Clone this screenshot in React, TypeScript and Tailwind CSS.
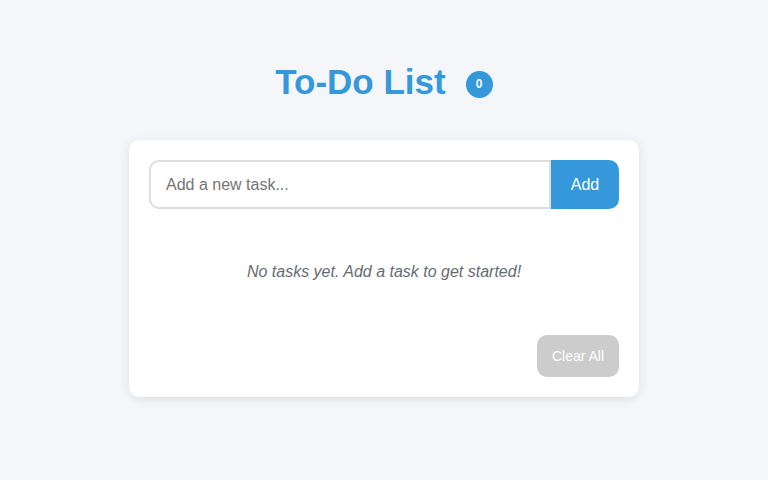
export default function App() {
  return (
    <div className="min-h-screen w-full bg-[#f4f6f9] pt-[62px] font-['Liberation_Sans',Arial,sans-serif]">
      <div className="flex items-center justify-center gap-[20px]">
        <h1 className="text-[35px] font-bold leading-[39px] text-[#3498db]">To-Do List</h1>
        <span className="mt-[5px] flex h-[27px] w-[27px] items-center justify-center rounded-full bg-[#3498db] text-[12px] font-bold text-white">
          0
        </span>
      </div>
      <div className="mx-auto mt-[39px] w-[510px] rounded-[10px] bg-white p-[20px] shadow-[0_2px_10px_rgba(0,0,0,0.1)]">
        <div className="flex">
          <input
            type="text"
            placeholder="Add a new task..."
            className="h-[49px] flex-1 rounded-l-[10px] border-2 border-[#ddd] px-[15px] text-[16px] text-[#333] outline-none placeholder:text-[#757575]"
          />
          <button className="h-[49px] w-[68px] rounded-r-[10px] bg-[#3498db] text-[16px] text-white">Add</button>
        </div>
        <div className="mt-[20px] pt-[34px] pb-[54px] text-center text-[16px] italic leading-[18px] text-[#666b70]">
          No tasks yet. Add a task to get started!
        </div>
        <div className="flex justify-end">
          <button className="h-[42px] w-[82px] rounded-[10px] bg-[#cccccc] text-[14px] text-white">Clear All</button>
        </div>
      </div>
    </div>
  );
}
